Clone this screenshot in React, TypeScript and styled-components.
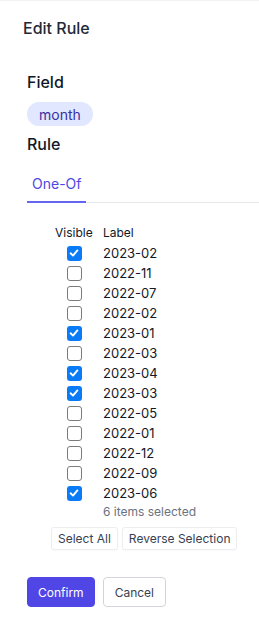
import { useState } from "react";
import styled, { createGlobalStyle } from "styled-components";

const GlobalStyle = createGlobalStyle`
  html, body {
    margin: 0;
    padding: 0;
    background: #fff;
  }
  body {
    font-family: Inter, "Noto Sans", "Liberation Sans", sans-serif;
    -webkit-font-smoothing: antialiased;
  }
`;

const Panel = styled.div`
  width: 259px;
  min-height: 635px;
  background: #fff;
  border-top: 1px solid #f1f2f4;
  box-sizing: border-box;
`;

const Title = styled.h2`
  margin: 0;
  padding: 15px 23px 0;
  font-size: 16px;
  line-height: 24px;
  font-weight: 500;
  color: #1f2937;
`;

const Body = styled.div`
  padding: 30px 0 0 27px;
  display: flex;
  flex-direction: column;
  align-items: flex-start;
`;

const Heading = styled.h3`
  margin: 0;
  font-size: 16px;
  line-height: 24px;
  font-weight: 500;
  color: #111827;
  margin-top: ${(p: { $gap?: number }) => p.$gap ?? 0}px;
`;

const Pill = styled.span`
  margin-top: 8px;
  display: inline-flex;
  align-items: center;
  height: 24px;
  padding: 0 12px;
  border-radius: 12px;
  background: #e0e7ff;
  color: #3730a3;
  font-size: 14px;
`;

const TabList = styled.div`
  margin-top: 10px;
  align-self: stretch;
  display: flex;
  border-bottom: 1px solid #e5e7eb;
`;

const Tab = styled.button`
  font: inherit;
  font-size: 14px;
  line-height: 20px;
  background: none;
  border: none;
  padding: 8px 5px 7px;
  margin-bottom: -1px;
  color: ${(p: { $active?: boolean }) => (p.$active ? "#4f46e5" : "#6b7280")};
  border-bottom: 2px solid
    ${(p: { $active?: boolean }) => (p.$active ? "#6366f1" : "transparent")};
  cursor: pointer;
`;

const Table = styled.div`
  margin: 20px 0 0 28px;
  display: grid;
  grid-template-columns: 38px auto;
  column-gap: 10px;
  font-size: 12px;
  color: #111827;
`;

const HeadCell = styled.div`
  height: 20px;
  line-height: 20px;
  white-space: nowrap;
`;

const BoxCell = styled.label`
  height: 20px;
  display: flex;
  align-items: center;
  justify-content: center;
  cursor: pointer;
`;

const LabelCell = styled.div`
  height: 20px;
  line-height: 20px;
  font-size: 13px;
`;

const Box = styled.span`
  width: 15px;
  height: 15px;
  box-sizing: border-box;
  border-radius: 3px;
  display: flex;
  align-items: center;
  justify-content: center;
  background: ${(p: { $on: boolean }) => (p.$on ? "#0b7af5" : "#fff")};
  border: ${(p: { $on: boolean }) => (p.$on ? "none" : "1px solid #7b7b7b")};
`;

const Summary = styled.div`
  grid-column: 2;
  height: 18px;
  line-height: 18px;
  color: #6b7280;
  font-size: 12px;
`;

const SmallActions = styled.div`
  margin: 7px 0 0 25px;
  display: flex;
  gap: 6px;
`;

const SmallButton = styled.button`
  font: inherit;
  font-size: 12px;
  color: #374151;
  height: 21px;
  padding: 0 6px;
  background: #fff;
  border: none;
  border-radius: 2px;
  box-shadow: 0 0 0 1px #eceef1, 0 1px 2px rgba(0, 0, 0, 0.08);
  cursor: pointer;
`;

const Footer = styled.div`
  margin-top: 28px;
  display: flex;
  gap: 8px;
`;

const Button = styled.button`
  font: inherit;
  font-size: 12px;
  height: 30px;
  padding: 0 ${(p: { $primary?: boolean }) => (p.$primary ? 10 : 11)}px;
  border-radius: 4px;
  cursor: pointer;
  ${(p: { $primary?: boolean }) =>
    p.$primary
      ? `background: #4f46e5; color: #fff; border: 1px solid #4f46e5;`
      : `background: #fff; color: #374151; border: 1px solid #d1d5db;`}
`;

const Check = () => (
  <svg width="10" height="10" viewBox="0 0 10 10">
    <path
      d="M1.6 5.3 L4 7.6 L8.4 2.4"
      fill="none"
      stroke="#fff"
      strokeWidth="1.9"
      strokeLinecap="round"
      strokeLinejoin="round"
    />
  </svg>
);

const hiddenSelected = 1;

const initial = [
  { label: "2023-02", on: true },
  { label: "2022-11", on: false },
  { label: "2022-07", on: false },
  { label: "2022-02", on: false },
  { label: "2023-01", on: true },
  { label: "2022-03", on: false },
  { label: "2023-04", on: true },
  { label: "2023-03", on: true },
  { label: "2022-05", on: false },
  { label: "2022-01", on: false },
  { label: "2022-12", on: false },
  { label: "2022-09", on: false },
  { label: "2023-06", on: true },
];

export default function App() {
  const [items, setItems] = useState(initial);
  const count = items.filter((i) => i.on).length + hiddenSelected;

  const toggle = (idx: number) =>
    setItems(items.map((it, i) => (i === idx ? { ...it, on: !it.on } : it)));

  return (
    <>
      <GlobalStyle />
      <Panel>
        <Title>Edit Rule</Title>
        <Body>
          <Heading>Field</Heading>
          <Pill>month</Pill>
          <Heading $gap={6}>Rule</Heading>
          <TabList>
            <Tab $active>One-Of</Tab>
          </TabList>
          <Table>
            <HeadCell>Visible</HeadCell>
            <HeadCell>Label</HeadCell>
            {items.map((it, i) => [
              <BoxCell key={it.label + "b"} onClick={() => toggle(i)}>
                <Box $on={it.on}>{it.on && <Check />}</Box>
              </BoxCell>,
              <LabelCell key={it.label}>{it.label}</LabelCell>,
            ])}
            <Summary>{count} items selected</Summary>
          </Table>
          <SmallActions>
            <SmallButton
              onClick={() => setItems(items.map((i) => ({ ...i, on: true })))}
            >
              Select All
            </SmallButton>
            <SmallButton
              onClick={() => setItems(items.map((i) => ({ ...i, on: !i.on })))}
            >
              Reverse Selection
            </SmallButton>
          </SmallActions>
          <Footer>
            <Button $primary>Confirm</Button>
            <Button>Cancel</Button>
          </Footer>
        </Body>
      </Panel>
    </>
  );
}
